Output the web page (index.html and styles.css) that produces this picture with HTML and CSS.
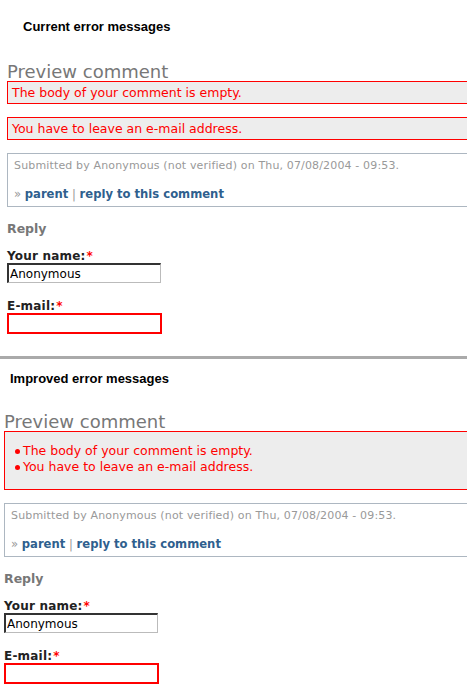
FILE: index.html
```html
<!DOCTYPE html>
<html>
<head>
<meta charset="utf-8">
<link rel="stylesheet" href="styles.css">
</head>
<body>
<section class="demo demo-current">
  <h2 class="demo-title">Current error messages</h2>
  <h3 class="preview-title">Preview comment</h3>
  <div class="msg-box">The body of your comment is empty.</div>
  <div class="msg-box msg-second">You have to leave an e-mail address.</div>
  <div class="comment">
    <div class="submitted">Submitted by Anonymous (not verified) on Thu, 07/08/2004 - 09:53.</div>
    <div class="links"><span class="raquo">»</span> <a href="#">parent</a> <span class="sep">|</span> <a href="#">reply to this comment</a></div>
  </div>
  <h4 class="reply">Reply</h4>
  <div class="field">
    <label class="label">Your name:<span class="req">*</span></label>
    <input class="text-input" type="text" value="Anonymous">
  </div>
  <div class="field field-email">
    <label class="label">E-mail:<span class="req">*</span></label>
    <input class="text-input error-input" type="text" value="">
  </div>
</section>
<hr class="divider">
<section class="demo demo-improved">
  <h2 class="demo-title">Improved error messages</h2>
  <h3 class="preview-title">Preview comment</h3>
  <div class="msg-box msg-list">
    <ul>
      <li>The body of your comment is empty.</li>
      <li>You have to leave an e-mail address.</li>
    </ul>
  </div>
  <div class="comment">
    <div class="submitted">Submitted by Anonymous (not verified) on Thu, 07/08/2004 - 09:53.</div>
    <div class="links"><span class="raquo">»</span> <a href="#">parent</a> <span class="sep">|</span> <a href="#">reply to this comment</a></div>
  </div>
  <h4 class="reply">Reply</h4>
  <div class="field">
    <label class="label">Your name:<span class="req">*</span></label>
    <input class="text-input" type="text" value="Anonymous">
  </div>
  <div class="field field-email">
    <label class="label">E-mail:<span class="req">*</span></label>
    <input class="text-input error-input" type="text" value="">
  </div>
</section>
</body>
</html>
```
FILE: styles.css
```css
html, body {
  margin: 0;
  padding: 0;
  background: #fff;
  overflow: hidden;
}
body {
  font-family: "DejaVu Sans", Verdana, sans-serif;
  width: 467px;
}
.demo {
  overflow: hidden;
}
.demo-current {
  padding: 19px 0 0 7px;
}
.demo-improved {
  padding: 12px 0 0 4px;
}
.demo-title {
  font-family: "Liberation Sans", Arial, sans-serif;
  font-weight: bold;
  font-size: 13px;
  line-height: 16px;
  margin: 0 0 0 16px;
  color: #000;
}
.demo-improved .demo-title {
  margin-left: 6px;
}
.preview-title {
  font-weight: normal;
  font-size: 18px;
  line-height: 19px;
  color: #777;
  margin: 27px 0 0 0;
}
.demo-improved .preview-title {
  margin-top: 25px;
}
.msg-box {
  border: 1px solid #f00;
  background: #ededed;
  color: #f00;
  font-size: 12.5px;
  line-height: 15px;
  padding: 3px 4px;
  margin-right: -30px;
}
.msg-second {
  margin-top: 13px;
}
.msg-list {
  padding: 11px 0 14px 10px;
}
.msg-list ul {
  margin: 0;
  padding: 0;
  list-style: none;
}
.msg-list li {
  display: flex;
  align-items: center;
  gap: 3px;
  line-height: 16px;
}
.msg-list li::before {
  content: "";
  width: 5px;
  height: 5px;
  border-radius: 50%;
  background: #f00;
  flex: none;
}
.comment {
  border: 1px solid #adb7c1;
  margin: 13px -30px 0 0;
  padding: 4px 6px 4px 6px;
}
.submitted {
  font-size: 11px;
  line-height: 16px;
  letter-spacing: 0.15px;
  color: #999;
}
.links {
  margin-top: 12px;
  font-size: 11.6px;
  line-height: 16px;
  color: #888;
}
.links a {
  color: #2f5f8e;
  font-weight: bold;
  text-decoration: none;
}
.raquo {
  color: #999;
}
.sep {
  color: #999;
}
.reply {
  font-size: 12.5px;
  line-height: 16px;
  font-weight: bold;
  color: #777;
  margin: 14px 0 0 0;
}
.field {
  display: flex;
  flex-direction: column;
  align-items: flex-start;
  margin-top: 10px;
}
.field-email {
  margin-top: 14px;
}
.label {
  font-size: 12px;
  line-height: 14px;
  padding-top: 2px;
  letter-spacing: 0.2px;
  font-weight: bold;
  color: #222;
}
.req {
  color: #f00;
  margin-left: 1px;
}
.text-input {
  box-sizing: border-box;
  width: 154px;
  height: 20px;
  margin: 0;
  padding: 0 0 0 1px;
  font-family: "DejaVu Sans", Verdana, sans-serif;
  font-size: 12px;
  color: #000;
  background: #fff;
  border-style: solid;
  border-width: 2px 1px 1px 2px;
  border-color: #333 #bbb #bbb #333;
  outline: none;
}
.error-input {
  width: 155px;
  height: 21px;
  border: 2px solid #f00;
}
.divider {
  border: 0;
  height: 3px;
  background: #aaa;
  margin: 22px 0 0 0;
}
```
